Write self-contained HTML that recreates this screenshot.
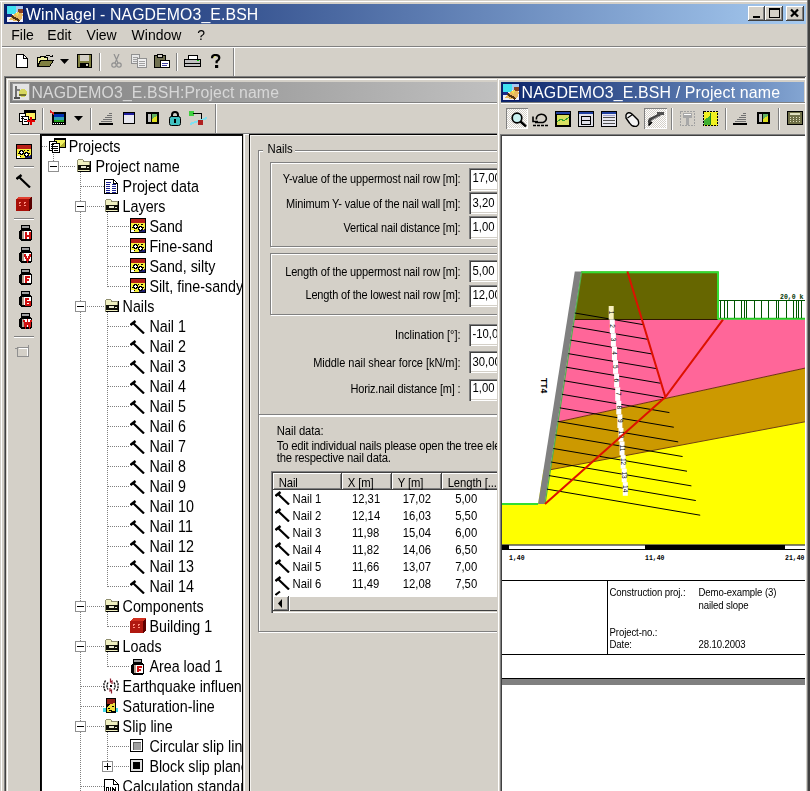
<!DOCTYPE html>
<html><head><meta charset="utf-8"><style>
html,body{margin:0;padding:0}
body{width:810px;height:791px;overflow:hidden;position:relative;background:#D4D0C8;font-family:"Liberation Sans", sans-serif}
.t{position:absolute;white-space:nowrap;line-height:1;font-family:"Liberation Sans", sans-serif;filter:grayscale(1)}
svg{overflow:hidden}
</style></head><body>
<div style="position:absolute;left:0px;top:0px;width:810px;height:1px;background:#D4D0C8"></div><div style="position:absolute;left:0px;top:1px;width:810px;height:1px;background:#FFFFFF"></div><div style="position:absolute;left:1px;top:1px;width:1px;height:790px;background:#FFFFFF"></div><div style="position:absolute;left:807px;top:0px;width:1px;height:791px;background:#808080"></div><div style="position:absolute;left:808px;top:0px;width:1px;height:791px;background:#404040"></div><div style="position:absolute;left:809px;top:0px;width:1px;height:791px;background:#404040"></div><div style="position:absolute;left:4px;top:4px;width:802px;height:20px;background:linear-gradient(to right,#0A246A,#A6CAF0)"></div><svg style="position:absolute;left:6px;top:5px" width="18" height="18" viewBox="0 0 18 18" shape-rendering="crispEdges"><rect x="0" y="0" width="18" height="18" fill="#0A1A6A"/><rect x="1" y="1" width="16" height="16" fill="#EEF0F8"/><rect x="1" y="1" width="9" height="8" fill="#40E0F0"/><rect x="10" y="1" width="7" height="6" fill="#A8C8F0"/><rect x="1" y="9" width="5" height="3" fill="#1A2A8A"/><polygon points="3,15 7,10 12,7 17,9 16,14 10,16" fill="#E8B860"/><polygon points="6,10 14,15 13,17 5,12" fill="#503010"/><rect x="12" y="4" width="5" height="4" fill="#8A4020"/><polygon points="9,9 13,7 12,11" fill="#F0E050"/></svg><div class="t" style="left:26px;top:6.63px;font-size:15.8px;color:#fff;letter-spacing:0.13px">WinNagel - NAGDEMO3_E.BSH</div><div style="position:absolute;left:748px;top:6px;width:17px;height:15px;background:#D4D0C8;box-shadow:inset -1px -1px #404040,inset 1px 1px #FFFFFF,inset -2px -2px #808080"></div><svg style="position:absolute;left:748px;top:6px" width="17" height="15" viewBox="0 0 17 15" shape-rendering="crispEdges"><rect x="5" y="10" width="7" height="2" fill="#000"/></svg><div style="position:absolute;left:765px;top:6px;width:18px;height:15px;background:#D4D0C8;box-shadow:inset -1px -1px #404040,inset 1px 1px #FFFFFF,inset -2px -2px #808080"></div><svg style="position:absolute;left:765px;top:6px" width="18" height="15" viewBox="0 0 18 15" shape-rendering="crispEdges"><rect x="4" y="2" width="10" height="9" fill="none" stroke="#000" stroke-width="1" transform="translate(0.5,0.5)"/><rect x="4" y="2" width="11" height="2" fill="#000"/></svg><div style="position:absolute;left:786px;top:6px;width:18px;height:15px;background:#D4D0C8;box-shadow:inset -1px -1px #404040,inset 1px 1px #FFFFFF,inset -2px -2px #808080"></div><svg style="position:absolute;left:786px;top:6px" width="18" height="15" viewBox="0 0 18 15" shape-rendering="crispEdges"><path d="M5 3.5 L12 10.5 M12 3.5 L5 10.5" stroke="#000" stroke-width="2.2" shape-rendering="auto"/></svg><div class="t" style="left:11.3px;top:28.15px;font-size:14px;color:#000;transform:scaleY(1.08);transform-origin:0 11.85px;">File</div><div class="t" style="left:47.3px;top:28.15px;font-size:14px;color:#000;transform:scaleY(1.08);transform-origin:0 11.85px;">Edit</div><div class="t" style="left:86.6px;top:28.15px;font-size:14px;color:#000;transform:scaleY(1.08);transform-origin:0 11.85px;">View</div><div class="t" style="left:131.6px;top:28.15px;font-size:14px;color:#000;transform:scaleY(1.08);transform-origin:0 11.85px;">Window</div><div class="t" style="left:197.2px;top:28.15px;font-size:14px;color:#000;transform:scaleY(1.08);transform-origin:0 11.85px;">?</div><div style="position:absolute;left:2px;top:46px;width:804px;height:1px;background:#808080"></div><div style="position:absolute;left:2px;top:47px;width:804px;height:1px;background:#FFFFFF"></div><svg style="position:absolute;left:16px;top:54px" width="12" height="14" viewBox="0 0 12 14" shape-rendering="crispEdges"><path d="M0.5 0.5 H7.5 L11.5 4.5 V13.5 H0.5 Z" fill="#fff" stroke="#000"/><path d="M7.5 0.5 V4.5 H11.5" fill="none" stroke="#000"/></svg><svg style="position:absolute;left:37px;top:54px" width="17" height="13" viewBox="0 0 17 13" shape-rendering="crispEdges"><path d="M0.5 3.5 H3 L4 2.5 H7 L8 3.5 H10.5 V6 H3.5 L0.5 12.5 Z" fill="#F0F0A0" stroke="#000"/><path d="M0.5 12.5 L4 6.5 H16.5 L12.5 12.5 Z" fill="#808040" stroke="#000"/><path d="M8 2.5 Q11 -0.5 14 2.5" fill="none" stroke="#000"/><path d="M12.5 2.5 H15.5 V0.5" fill="none" stroke="#000"/></svg><svg style="position:absolute;left:60px;top:59px" width="9" height="5" viewBox="0 0 9 5"><polygon points="0,0 9,0 4.5,5" fill="#000"/></svg><svg style="position:absolute;left:77px;top:54px" width="15" height="14" viewBox="0 0 15 14" shape-rendering="crispEdges"><rect x="0.5" y="0.5" width="14" height="13" fill="#808040" stroke="#000"/><rect x="3" y="1" width="9" height="6" fill="#D4D0C8"/><rect x="3" y="9" width="9" height="4" fill="#000"/><rect x="9" y="10" width="2" height="2" fill="#D4D0C8"/></svg><div style="position:absolute;left:99px;top:53px;width:1px;height:18px;background:#808080"></div><div style="position:absolute;left:100px;top:53px;width:1px;height:18px;background:#FFFFFF"></div><svg style="position:absolute;left:111px;top:54px" width="11" height="14" viewBox="0 0 11 14"><path d="M3 0 L7 9 M8 0 L4 9" stroke="#909090" stroke-width="1.2"/><circle cx="3" cy="11" r="2.2" fill="none" stroke="#909090" stroke-width="1.2"/><circle cx="8" cy="11" r="2.2" fill="none" stroke="#909090" stroke-width="1.2"/></svg><svg style="position:absolute;left:131px;top:54px" width="16" height="14" viewBox="0 0 16 14" shape-rendering="crispEdges"><rect x="0.5" y="0.5" width="8" height="9" fill="#E8E8E8" stroke="#909090"/><rect x="6.5" y="4.5" width="9" height="9" fill="#F0F0F0" stroke="#909090"/><path d="M2 3H7M2 5H7M2 7H6M8 7H14M8 9H14M8 11H14" stroke="#A0A0A0"/></svg><svg style="position:absolute;left:154px;top:54px" width="16" height="14" viewBox="0 0 16 14" shape-rendering="crispEdges"><rect x="0.5" y="1.5" width="11" height="12" fill="#707050" stroke="#000"/><rect x="3.5" y="0.5" width="5" height="3" fill="#D4D0C8" stroke="#000"/><rect x="6.5" y="6.5" width="9" height="7" fill="#fff" stroke="#000"/><path d="M8 9H14M8 11H13" stroke="#4040A0"/></svg><div style="position:absolute;left:176px;top:53px;width:1px;height:18px;background:#808080"></div><div style="position:absolute;left:177px;top:53px;width:1px;height:18px;background:#FFFFFF"></div><svg style="position:absolute;left:184px;top:55px" width="17" height="12" viewBox="0 0 17 12" shape-rendering="crispEdges"><rect x="4.5" y="0.5" width="9" height="4" fill="#fff" stroke="#000"/><path d="M0.5 4.5 H16.5 V11.5 H0.5 Z" fill="#C0C0C0" stroke="#000"/><path d="M1 8H16" stroke="#000"/><rect x="13" y="5" width="2" height="1" fill="#0C0"/></svg><svg style="position:absolute;left:210px;top:54px" width="11" height="14" viewBox="0 0 11 14"><path d="M2 4.2 Q2 1 5.5 1 Q9.3 1 9.3 4 Q9.3 6 6.6 7.5 L6.6 9.3" fill="none" stroke="#000" stroke-width="2.2"/><rect x="5" y="11" width="3.2" height="3" fill="#000"/><path d="M4 4 Q4 2.5 5.5 2.5" stroke="#F0F060" fill="none"/></svg><div style="position:absolute;left:233px;top:48px;width:1px;height:28px;background:#808080"></div><div style="position:absolute;left:234px;top:48px;width:1px;height:28px;background:#FFFFFF"></div><div style="position:absolute;left:4px;top:76px;width:802px;height:1px;background:#808080"></div><div style="position:absolute;left:4px;top:76px;width:1px;height:715px;background:#808080"></div><div style="position:absolute;left:5px;top:77px;width:801px;height:1px;background:#404040"></div><div style="position:absolute;left:5px;top:77px;width:1px;height:714px;background:#404040"></div><div style="position:absolute;left:805px;top:77px;width:1px;height:714px;background:#FFFFFF"></div><div style="position:absolute;left:6px;top:78px;width:491px;height:1px;background:#D4D0C8"></div><div style="position:absolute;left:6px;top:78px;width:1px;height:713px;background:#D4D0C8"></div><div style="position:absolute;left:7px;top:79px;width:490px;height:1px;background:#FFFFFF"></div><div style="position:absolute;left:7px;top:79px;width:1px;height:712px;background:#FFFFFF"></div><div style="position:absolute;left:10px;top:82px;width:487px;height:20px;background:linear-gradient(to right,#808080,#C0C0C0 488px)"></div><svg style="position:absolute;left:12px;top:83px" width="18" height="18" viewBox="0 0 18 18" shape-rendering="crispEdges"><rect x="0" y="0" width="18" height="18" fill="#9A9A9A"/><rect x="1" y="1" width="16" height="16" fill="#E4E4E4"/><rect x="3" y="3" width="2" height="11" fill="#707070"/><rect x="5" y="6" width="3" height="2" fill="#808080"/><circle cx="11" cy="10" r="4" fill="#D8D860"/><rect x="7" y="11" width="7" height="2" fill="#707030"/><rect x="2" y="14" width="6" height="2" fill="#505050"/></svg><div class="t" style="left:31.5px;top:84.63px;font-size:15.8px;color:#D8D8D0;letter-spacing:0.13px">NAGDEMO3_E.BSH:Project name</div><div style="position:absolute;left:10px;top:102px;width:487px;height:1px;background:#808080"></div><div style="position:absolute;left:10px;top:103px;width:487px;height:1px;background:#FFFFFF"></div><div style="position:absolute;left:10px;top:133px;width:487px;height:1px;background:#808080"></div><div style="position:absolute;left:10px;top:134px;width:487px;height:1px;background:#FFFFFF"></div><svg style="position:absolute;left:19px;top:110px" width="17" height="16" viewBox="0 0 17 16" shape-rendering="crispEdges"><rect x="5.5" y="0.5" width="11" height="9" fill="#FFF060" stroke="#000"/><rect x="5.5" y="0.5" width="11" height="2" fill="#000"/><rect x="0.5" y="3.5" width="6" height="8" fill="#fff" stroke="#000"/><rect x="3.5" y="6.5" width="6" height="8" fill="#fff" stroke="#000"/><path d="M2 6H5M2 8H5M5 9H8M5 11H8" stroke="#000"/><path d="M12 7 V15 M8 11 H16" stroke="#E00000" stroke-width="2"/></svg><div style="position:absolute;left:42px;top:108px;width:1px;height:22px;background:#808080"></div><div style="position:absolute;left:43px;top:108px;width:1px;height:22px;background:#FFFFFF"></div><svg style="position:absolute;left:50px;top:110px" width="17" height="15" viewBox="0 0 17 15" shape-rendering="crispEdges"><rect x="2" y="2" width="14" height="13" fill="#000"/><rect x="4" y="4" width="10" height="4" fill="#0030B0"/><rect x="4" y="7" width="10" height="3" fill="#30A0B0"/><rect x="4" y="10" width="10" height="2" fill="#20A020"/><path d="M3 13.5H15" stroke="#fff" stroke-dasharray="1 1"/><path d="M0 1 L4 4" stroke="#E02020" stroke-width="2"/></svg><svg style="position:absolute;left:74px;top:116px" width="9" height="5" viewBox="0 0 9 5"><polygon points="0,0 9,0 4.5,5" fill="#000"/></svg><div style="position:absolute;left:90px;top:108px;width:1px;height:22px;background:#808080"></div><div style="position:absolute;left:91px;top:108px;width:1px;height:22px;background:#FFFFFF"></div><svg style="position:absolute;left:99px;top:113px" width="14" height="12" viewBox="0 0 14 12" shape-rendering="crispEdges"><path d="M10 0.5H13M8 2.5H13M6 4.5H13M4 6.5H13M2 8.5H13" stroke="#707070"/><rect x="0" y="10" width="14" height="2" fill="#000"/></svg><svg style="position:absolute;left:123px;top:112px" width="12" height="12" viewBox="0 0 12 12" shape-rendering="crispEdges"><rect x="0.5" y="0.5" width="11" height="11" fill="#E8E8F0" stroke="#000"/><rect x="1" y="1" width="10" height="2" fill="#2020A0"/></svg><svg style="position:absolute;left:146px;top:112px" width="13" height="12" viewBox="0 0 13 12" shape-rendering="crispEdges"><rect x="0" y="0" width="13" height="12" fill="#000"/><rect x="2" y="2" width="3" height="8" fill="#C0C0C0"/><rect x="6" y="2" width="5" height="8" fill="#60B060"/><polygon points="6,10 6,7 11,4 11,10" fill="#E0E020"/></svg><svg style="position:absolute;left:169px;top:111px" width="12" height="15" viewBox="0 0 12 15"><path d="M3 6 V4 Q3 1 6 1 Q9 1 9 4 V6" fill="none" stroke="#000" stroke-width="2"/><rect x="0.5" y="5.5" width="11" height="9" rx="2" fill="#40C0C0" stroke="#000"/><rect x="5" y="8" width="2" height="4" fill="#000"/></svg><svg style="position:absolute;left:189px;top:111px" width="19" height="15" viewBox="0 0 19 15" shape-rendering="crispEdges"><rect x="0" y="0" width="5" height="5" fill="#40D040"/><path d="M4 2.5H12V9" fill="none" stroke="#000"/><path d="M1 13 L18 7" stroke="#80E0F0" stroke-width="2"/><rect x="9" y="9" width="5" height="5" fill="#B02020"/></svg><div style="position:absolute;left:215px;top:104px;width:1px;height:29px;background:#808080"></div><div style="position:absolute;left:216px;top:104px;width:1px;height:29px;background:#FFFFFF"></div><svg style="position:absolute;left:16px;top:144px" width="16" height="15" viewBox="0 0 16 15" shape-rendering="crispEdges"><rect x="0" y="0" width="16" height="15" fill="#000"/><rect x="1" y="1" width="14" height="4" fill="#B82018"/><rect x="1" y="5" width="14" height="9" fill="#F8F040"/><polygon points="8,14 15,11 15,14" fill="#202070"/><circle cx="5.5" cy="8.5" r="1.8" fill="#fff" stroke="#000" stroke-width="1.2"/><circle cx="10.5" cy="10.5" r="1.8" fill="#fff" stroke="#000" stroke-width="1.2"/><path d="M2 9.5h1M11 6.5h2M3 12.5h2M8 6.5h1M13 9h1" stroke="#000"/><rect x="1" y="12" width="3" height="2" fill="#fff"/></svg><div style="position:absolute;left:14px;top:166px;width:20px;height:1px;background:#808080"></div><div style="position:absolute;left:14px;top:167px;width:20px;height:1px;background:#FFFFFF"></div><svg style="position:absolute;left:16px;top:174px" width="15" height="14" viewBox="0 0 15 14"><path d="M0.5 5 L5.5 1" stroke="#000" stroke-width="2.4"/><path d="M3 3 L14 13.5" stroke="#000" stroke-width="2.2"/></svg><svg style="position:absolute;left:16px;top:197px" width="16" height="14" viewBox="0 0 16 14" shape-rendering="crispEdges"><rect x="0" y="2" width="13" height="12" fill="#A81008"/><polygon points="0,2 3,0 16,0 13,2" fill="#E04030"/><polygon points="13,2 16,0 16,11 13,14" fill="#580000"/><path d="M3 5H5M3 8H5M8 5H10M8 8H10M3 6V7M8 6V7" stroke="#FF9080"/></svg><div style="position:absolute;left:14px;top:218px;width:20px;height:1px;background:#808080"></div><div style="position:absolute;left:14px;top:219px;width:20px;height:1px;background:#FFFFFF"></div><svg style="position:absolute;left:18px;top:225px" width="15" height="16" viewBox="0 0 15 16" shape-rendering="crispEdges"><rect x="3" y="0" width="9" height="4" fill="#000"/><rect x="4" y="1" width="7" height="2" fill="#A0A0A0"/><polygon points="3,4 12,4 14,6 14,14 12,16 3,16 1,14 1,6" fill="#000"/><rect x="4" y="6" width="9" height="8" fill="#fff"/><rect x="4" y="6" width="2" height="8" fill="#B0A090"/><path d="M7.5 7 V14 M11.5 7 V14 M7.5 10.5 H11.5" fill="none" stroke="#D01010" stroke-width="2"/></svg><svg style="position:absolute;left:18px;top:247px" width="15" height="16" viewBox="0 0 15 16" shape-rendering="crispEdges"><rect x="3" y="0" width="9" height="4" fill="#000"/><rect x="4" y="1" width="7" height="2" fill="#A0A0A0"/><polygon points="3,4 12,4 14,6 14,14 12,16 3,16 1,14 1,6" fill="#000"/><rect x="4" y="6" width="9" height="8" fill="#fff"/><rect x="4" y="6" width="2" height="8" fill="#B0A090"/><path d="M6.5 7 L9.5 14 L12.5 7" fill="none" stroke="#D01010" stroke-width="2"/></svg><svg style="position:absolute;left:18px;top:269px" width="15" height="16" viewBox="0 0 15 16" shape-rendering="crispEdges"><rect x="3" y="0" width="9" height="4" fill="#000"/><rect x="4" y="1" width="7" height="2" fill="#A0A0A0"/><polygon points="3,4 12,4 14,6 14,14 12,16 3,16 1,14 1,6" fill="#000"/><rect x="4" y="6" width="9" height="8" fill="#fff"/><rect x="4" y="6" width="2" height="8" fill="#B0A090"/><path d="M7.5 7 V14 M7.5 7.5 H12 M7.5 10.5 H11" fill="none" stroke="#D01010" stroke-width="2"/></svg><svg style="position:absolute;left:18px;top:291px" width="15" height="16" viewBox="0 0 15 16" shape-rendering="crispEdges"><rect x="3" y="0" width="9" height="4" fill="#000"/><rect x="4" y="1" width="7" height="2" fill="#A0A0A0"/><polygon points="3,4 12,4 14,6 14,14 12,16 3,16 1,14 1,6" fill="#000"/><rect x="4" y="6" width="9" height="8" fill="#fff"/><rect x="4" y="6" width="2" height="8" fill="#B0A090"/><path d="M7.5 7 V14 H11.5 V10.5 H7.5 M7.5 7.5 H11" fill="none" stroke="#D01010" stroke-width="2"/></svg><svg style="position:absolute;left:18px;top:313px" width="15" height="16" viewBox="0 0 15 16" shape-rendering="crispEdges"><rect x="3" y="0" width="9" height="4" fill="#000"/><rect x="4" y="1" width="7" height="2" fill="#A0A0A0"/><polygon points="3,4 12,4 14,6 14,14 12,16 3,16 1,14 1,6" fill="#000"/><rect x="4" y="6" width="9" height="8" fill="#fff"/><rect x="4" y="6" width="2" height="8" fill="#B0A090"/><path d="M6 7 L7.5 14 L9.5 9 L11.5 14 L13 7" fill="none" stroke="#D01010" stroke-width="2"/></svg><div style="position:absolute;left:14px;top:336px;width:20px;height:1px;background:#808080"></div><div style="position:absolute;left:14px;top:337px;width:20px;height:1px;background:#FFFFFF"></div><svg style="position:absolute;left:15px;top:344px" width="17" height="14" viewBox="0 0 17 14" shape-rendering="crispEdges"><path d="M2.5 3.5 H13.5 V12.5 H2.5 Z M0 4.5 H3 M13 1 V4" fill="none" stroke="#909090"/><path d="M3.5 4.5H12.5V11.5" fill="none" stroke="#fff"/></svg><div style="position:absolute;left:40px;top:134px;width:204px;height:657px;background:#fff"></div><div style="position:absolute;left:40px;top:134px;width:203px;height:1px;background:#000"></div><div style="position:absolute;left:40px;top:135px;width:203px;height:1px;background:#101010"></div><div style="position:absolute;left:40px;top:134px;width:1px;height:657px;background:#000"></div><div style="position:absolute;left:41px;top:134px;width:1px;height:657px;background:#101010"></div><div style="position:absolute;left:242px;top:134px;width:1px;height:657px;background:#000"></div><div style="position:absolute;left:243px;top:134px;width:1px;height:657px;background:#D4D0C8"></div><div style="position:absolute;left:244px;top:134px;width:1px;height:657px;background:#FFFFFF"></div><div style="position:absolute;left:42px;top:136px;width:200px;height:655px;overflow:hidden"><div style="position:absolute;left:11px;top:16px;width:1px;height:10px;background:repeating-linear-gradient(to bottom,#808080 0 1px,transparent 1px 2px)"></div><div style="position:absolute;left:38px;top:36px;width:1px;height:619px;background:repeating-linear-gradient(to bottom,#808080 0 1px,transparent 1px 2px)"></div><div style="position:absolute;left:65px;top:76px;width:1px;height:75px;background:repeating-linear-gradient(to bottom,#808080 0 1px,transparent 1px 2px)"></div><div style="position:absolute;left:65px;top:176px;width:1px;height:275px;background:repeating-linear-gradient(to bottom,#808080 0 1px,transparent 1px 2px)"></div><div style="position:absolute;left:65px;top:476px;width:1px;height:15px;background:repeating-linear-gradient(to bottom,#808080 0 1px,transparent 1px 2px)"></div><div style="position:absolute;left:65px;top:516px;width:1px;height:15px;background:repeating-linear-gradient(to bottom,#808080 0 1px,transparent 1px 2px)"></div><div style="position:absolute;left:65px;top:596px;width:1px;height:35px;background:repeating-linear-gradient(to bottom,#808080 0 1px,transparent 1px 2px)"></div><div style="position:absolute;left:0px;top:10px;width:6px;height:1px;background:repeating-linear-gradient(to right,#808080 0 1px,transparent 1px 2px)"></div><svg style="position:absolute;left:7px;top:2px" width="17" height="15" viewBox="0 0 17 15" shape-rendering="crispEdges"><rect x="5" y="0" width="12" height="10" fill="#000"/><rect x="6" y="2" width="10" height="7" fill="#F0F060"/><polygon points="10,9 16,3 16,9" fill="#B0B030"/><rect x="0.5" y="3.5" width="7" height="9" fill="#fff" stroke="#000"/><rect x="3.5" y="5.5" width="7" height="9" fill="#fff" stroke="#000"/><path d="M2 6H5M2 8H5M2 10H5M5 8H9M5 10H9M5 12H9" stroke="#000"/></svg><div class="t" style="left:26.8px;top:3.9px;font-size:14.3px;color:#000;transform:scaleY(1.09);transform-origin:0 12.1px;word-spacing:0px">Projects</div><div style="position:absolute;left:12px;top:30px;width:22px;height:1px;background:repeating-linear-gradient(to right,#808080 0 1px,transparent 1px 2px)"></div><svg style="position:absolute;left:6px;top:25px" width="11" height="11" viewBox="0 0 11 11" shape-rendering="crispEdges"><rect x="0.5" y="0.5" width="10" height="10" fill="#fff" stroke="#909090"/><path d="M2 5.5H9" stroke="#000"/></svg><svg style="position:absolute;left:34px;top:22px" width="16" height="14" viewBox="0 0 16 14" shape-rendering="crispEdges"><path d="M1.5 4 V2.5 L2.5 1.5 H6.5 L7.5 2.5 V3.5 H13.5 V13.5 H1.5 Z" fill="#F0F0C0" stroke="#909070"/><rect x="14" y="3" width="1" height="11" fill="#000"/><rect x="2" y="13" width="13" height="1" fill="#000"/><rect x="2" y="7" width="12" height="5" fill="#101008"/><rect x="5" y="8" width="5" height="2" fill="#E8E8D0"/><rect x="11" y="9" width="2" height="1" fill="#E8E8D0"/></svg><div class="t" style="left:53.4px;top:23.9px;font-size:14.3px;color:#000;transform:scaleY(1.09);transform-origin:0 12.1px;word-spacing:0px">Project name</div><div style="position:absolute;left:39px;top:50px;width:23px;height:1px;background:repeating-linear-gradient(to right,#808080 0 1px,transparent 1px 2px)"></div><svg style="position:absolute;left:62px;top:43px" width="14" height="15" viewBox="0 0 14 15" shape-rendering="crispEdges"><path d="M0.5 0.5 H9.5 L13.5 4.5 V14.5 H0.5 Z" fill="#fff" stroke="#000"/><path d="M9.5 0.5 V4.5 H13.5" fill="none" stroke="#000"/><path d="M2 3H7M2 5H6M8 5H12M2 7H6M8 7H12M2 9H6M8 9H12M2 11H6M8 11H12M2 13H6M8 13H12" stroke="#1A2090"/></svg><div class="t" style="left:80.6px;top:43.9px;font-size:14.3px;color:#000;transform:scaleY(1.09);transform-origin:0 12.1px;word-spacing:0px">Project data</div><div style="position:absolute;left:39px;top:70px;width:23px;height:1px;background:repeating-linear-gradient(to right,#808080 0 1px,transparent 1px 2px)"></div><svg style="position:absolute;left:33px;top:65px" width="11" height="11" viewBox="0 0 11 11" shape-rendering="crispEdges"><rect x="0.5" y="0.5" width="10" height="10" fill="#fff" stroke="#909090"/><path d="M2 5.5H9" stroke="#000"/></svg><svg style="position:absolute;left:62px;top:62px" width="16" height="14" viewBox="0 0 16 14" shape-rendering="crispEdges"><path d="M1.5 4 V2.5 L2.5 1.5 H6.5 L7.5 2.5 V3.5 H13.5 V13.5 H1.5 Z" fill="#F0F0C0" stroke="#909070"/><rect x="14" y="3" width="1" height="11" fill="#000"/><rect x="2" y="13" width="13" height="1" fill="#000"/><rect x="2" y="7" width="12" height="5" fill="#101008"/><rect x="5" y="8" width="5" height="2" fill="#E8E8D0"/><rect x="11" y="9" width="2" height="1" fill="#E8E8D0"/></svg><div class="t" style="left:80.6px;top:63.9px;font-size:14.3px;color:#000;transform:scaleY(1.09);transform-origin:0 12.1px;word-spacing:0px">Layers</div><div style="position:absolute;left:66px;top:90px;width:22px;height:1px;background:repeating-linear-gradient(to right,#808080 0 1px,transparent 1px 2px)"></div><svg style="position:absolute;left:88px;top:82px" width="16" height="15" viewBox="0 0 16 15" shape-rendering="crispEdges"><rect x="0" y="0" width="16" height="15" fill="#000"/><rect x="1" y="1" width="14" height="4" fill="#B82018"/><rect x="1" y="5" width="14" height="9" fill="#F8F040"/><polygon points="8,14 15,11 15,14" fill="#202070"/><circle cx="5.5" cy="8.5" r="1.8" fill="#fff" stroke="#000" stroke-width="1.2"/><circle cx="10.5" cy="10.5" r="1.8" fill="#fff" stroke="#000" stroke-width="1.2"/><path d="M2 9.5h1M11 6.5h2M3 12.5h2M8 6.5h1M13 9h1" stroke="#000"/><rect x="1" y="12" width="3" height="2" fill="#fff"/></svg><div class="t" style="left:107.4px;top:83.9px;font-size:14.3px;color:#000;transform:scaleY(1.09);transform-origin:0 12.1px;word-spacing:0px">Sand</div><div style="position:absolute;left:66px;top:110px;width:22px;height:1px;background:repeating-linear-gradient(to right,#808080 0 1px,transparent 1px 2px)"></div><svg style="position:absolute;left:88px;top:102px" width="16" height="15" viewBox="0 0 16 15" shape-rendering="crispEdges"><rect x="0" y="0" width="16" height="15" fill="#000"/><rect x="1" y="1" width="14" height="4" fill="#B82018"/><rect x="1" y="5" width="14" height="9" fill="#F8F040"/><polygon points="8,14 15,11 15,14" fill="#202070"/><circle cx="5.5" cy="8.5" r="1.8" fill="#fff" stroke="#000" stroke-width="1.2"/><circle cx="10.5" cy="10.5" r="1.8" fill="#fff" stroke="#000" stroke-width="1.2"/><path d="M2 9.5h1M11 6.5h2M3 12.5h2M8 6.5h1M13 9h1" stroke="#000"/><rect x="1" y="12" width="3" height="2" fill="#fff"/></svg><div class="t" style="left:107.4px;top:103.9px;font-size:14.3px;color:#000;transform:scaleY(1.09);transform-origin:0 12.1px;word-spacing:0px">Fine-sand</div><div style="position:absolute;left:66px;top:130px;width:22px;height:1px;background:repeating-linear-gradient(to right,#808080 0 1px,transparent 1px 2px)"></div><svg style="position:absolute;left:88px;top:122px" width="16" height="15" viewBox="0 0 16 15" shape-rendering="crispEdges"><rect x="0" y="0" width="16" height="15" fill="#000"/><rect x="1" y="1" width="14" height="4" fill="#B82018"/><rect x="1" y="5" width="14" height="9" fill="#F8F040"/><polygon points="8,14 15,11 15,14" fill="#202070"/><circle cx="5.5" cy="8.5" r="1.8" fill="#fff" stroke="#000" stroke-width="1.2"/><circle cx="10.5" cy="10.5" r="1.8" fill="#fff" stroke="#000" stroke-width="1.2"/><path d="M2 9.5h1M11 6.5h2M3 12.5h2M8 6.5h1M13 9h1" stroke="#000"/><rect x="1" y="12" width="3" height="2" fill="#fff"/></svg><div class="t" style="left:107.4px;top:123.9px;font-size:14.3px;color:#000;transform:scaleY(1.09);transform-origin:0 12.1px;word-spacing:0px">Sand, silty</div><div style="position:absolute;left:66px;top:150px;width:22px;height:1px;background:repeating-linear-gradient(to right,#808080 0 1px,transparent 1px 2px)"></div><svg style="position:absolute;left:88px;top:142px" width="16" height="15" viewBox="0 0 16 15" shape-rendering="crispEdges"><rect x="0" y="0" width="16" height="15" fill="#000"/><rect x="1" y="1" width="14" height="4" fill="#B82018"/><rect x="1" y="5" width="14" height="9" fill="#F8F040"/><polygon points="8,14 15,11 15,14" fill="#202070"/><circle cx="5.5" cy="8.5" r="1.8" fill="#fff" stroke="#000" stroke-width="1.2"/><circle cx="10.5" cy="10.5" r="1.8" fill="#fff" stroke="#000" stroke-width="1.2"/><path d="M2 9.5h1M11 6.5h2M3 12.5h2M8 6.5h1M13 9h1" stroke="#000"/><rect x="1" y="12" width="3" height="2" fill="#fff"/></svg><div class="t" style="left:107.4px;top:143.9px;font-size:14.3px;color:#000;transform:scaleY(1.09);transform-origin:0 12.1px;word-spacing:0px">Silt, fine-sandy</div><div style="position:absolute;left:39px;top:170px;width:23px;height:1px;background:repeating-linear-gradient(to right,#808080 0 1px,transparent 1px 2px)"></div><svg style="position:absolute;left:33px;top:165px" width="11" height="11" viewBox="0 0 11 11" shape-rendering="crispEdges"><rect x="0.5" y="0.5" width="10" height="10" fill="#fff" stroke="#909090"/><path d="M2 5.5H9" stroke="#000"/></svg><svg style="position:absolute;left:62px;top:162px" width="16" height="14" viewBox="0 0 16 14" shape-rendering="crispEdges"><path d="M1.5 4 V2.5 L2.5 1.5 H6.5 L7.5 2.5 V3.5 H13.5 V13.5 H1.5 Z" fill="#F0F0C0" stroke="#909070"/><rect x="14" y="3" width="1" height="11" fill="#000"/><rect x="2" y="13" width="13" height="1" fill="#000"/><rect x="2" y="7" width="12" height="5" fill="#101008"/><rect x="5" y="8" width="5" height="2" fill="#E8E8D0"/><rect x="11" y="9" width="2" height="1" fill="#E8E8D0"/></svg><div class="t" style="left:80.6px;top:163.9px;font-size:14.3px;color:#000;transform:scaleY(1.09);transform-origin:0 12.1px;word-spacing:0px">Nails</div><div style="position:absolute;left:66px;top:190px;width:22px;height:1px;background:repeating-linear-gradient(to right,#808080 0 1px,transparent 1px 2px)"></div><svg style="position:absolute;left:88px;top:184px" width="15" height="14" viewBox="0 0 15 14"><path d="M0.5 5 L5.5 1" stroke="#000" stroke-width="2.4"/><path d="M3 3 L14 13.5" stroke="#000" stroke-width="2.2"/></svg><div class="t" style="left:107.4px;top:183.9px;font-size:14.3px;color:#000;transform:scaleY(1.09);transform-origin:0 12.1px;word-spacing:0px">Nail 1</div><div style="position:absolute;left:66px;top:210px;width:22px;height:1px;background:repeating-linear-gradient(to right,#808080 0 1px,transparent 1px 2px)"></div><svg style="position:absolute;left:88px;top:204px" width="15" height="14" viewBox="0 0 15 14"><path d="M0.5 5 L5.5 1" stroke="#000" stroke-width="2.4"/><path d="M3 3 L14 13.5" stroke="#000" stroke-width="2.2"/></svg><div class="t" style="left:107.4px;top:203.9px;font-size:14.3px;color:#000;transform:scaleY(1.09);transform-origin:0 12.1px;word-spacing:0px">Nail 2</div><div style="position:absolute;left:66px;top:230px;width:22px;height:1px;background:repeating-linear-gradient(to right,#808080 0 1px,transparent 1px 2px)"></div><svg style="position:absolute;left:88px;top:224px" width="15" height="14" viewBox="0 0 15 14"><path d="M0.5 5 L5.5 1" stroke="#000" stroke-width="2.4"/><path d="M3 3 L14 13.5" stroke="#000" stroke-width="2.2"/></svg><div class="t" style="left:107.4px;top:223.9px;font-size:14.3px;color:#000;transform:scaleY(1.09);transform-origin:0 12.1px;word-spacing:0px">Nail 3</div><div style="position:absolute;left:66px;top:250px;width:22px;height:1px;background:repeating-linear-gradient(to right,#808080 0 1px,transparent 1px 2px)"></div><svg style="position:absolute;left:88px;top:244px" width="15" height="14" viewBox="0 0 15 14"><path d="M0.5 5 L5.5 1" stroke="#000" stroke-width="2.4"/><path d="M3 3 L14 13.5" stroke="#000" stroke-width="2.2"/></svg><div class="t" style="left:107.4px;top:243.9px;font-size:14.3px;color:#000;transform:scaleY(1.09);transform-origin:0 12.1px;word-spacing:0px">Nail 4</div><div style="position:absolute;left:66px;top:270px;width:22px;height:1px;background:repeating-linear-gradient(to right,#808080 0 1px,transparent 1px 2px)"></div><svg style="position:absolute;left:88px;top:264px" width="15" height="14" viewBox="0 0 15 14"><path d="M0.5 5 L5.5 1" stroke="#000" stroke-width="2.4"/><path d="M3 3 L14 13.5" stroke="#000" stroke-width="2.2"/></svg><div class="t" style="left:107.4px;top:263.9px;font-size:14.3px;color:#000;transform:scaleY(1.09);transform-origin:0 12.1px;word-spacing:0px">Nail 5</div><div style="position:absolute;left:66px;top:290px;width:22px;height:1px;background:repeating-linear-gradient(to right,#808080 0 1px,transparent 1px 2px)"></div><svg style="position:absolute;left:88px;top:284px" width="15" height="14" viewBox="0 0 15 14"><path d="M0.5 5 L5.5 1" stroke="#000" stroke-width="2.4"/><path d="M3 3 L14 13.5" stroke="#000" stroke-width="2.2"/></svg><div class="t" style="left:107.4px;top:283.9px;font-size:14.3px;color:#000;transform:scaleY(1.09);transform-origin:0 12.1px;word-spacing:0px">Nail 6</div><div style="position:absolute;left:66px;top:310px;width:22px;height:1px;background:repeating-linear-gradient(to right,#808080 0 1px,transparent 1px 2px)"></div><svg style="position:absolute;left:88px;top:304px" width="15" height="14" viewBox="0 0 15 14"><path d="M0.5 5 L5.5 1" stroke="#000" stroke-width="2.4"/><path d="M3 3 L14 13.5" stroke="#000" stroke-width="2.2"/></svg><div class="t" style="left:107.4px;top:303.9px;font-size:14.3px;color:#000;transform:scaleY(1.09);transform-origin:0 12.1px;word-spacing:0px">Nail 7</div><div style="position:absolute;left:66px;top:330px;width:22px;height:1px;background:repeating-linear-gradient(to right,#808080 0 1px,transparent 1px 2px)"></div><svg style="position:absolute;left:88px;top:324px" width="15" height="14" viewBox="0 0 15 14"><path d="M0.5 5 L5.5 1" stroke="#000" stroke-width="2.4"/><path d="M3 3 L14 13.5" stroke="#000" stroke-width="2.2"/></svg><div class="t" style="left:107.4px;top:323.9px;font-size:14.3px;color:#000;transform:scaleY(1.09);transform-origin:0 12.1px;word-spacing:0px">Nail 8</div><div style="position:absolute;left:66px;top:350px;width:22px;height:1px;background:repeating-linear-gradient(to right,#808080 0 1px,transparent 1px 2px)"></div><svg style="position:absolute;left:88px;top:344px" width="15" height="14" viewBox="0 0 15 14"><path d="M0.5 5 L5.5 1" stroke="#000" stroke-width="2.4"/><path d="M3 3 L14 13.5" stroke="#000" stroke-width="2.2"/></svg><div class="t" style="left:107.4px;top:343.9px;font-size:14.3px;color:#000;transform:scaleY(1.09);transform-origin:0 12.1px;word-spacing:0px">Nail 9</div><div style="position:absolute;left:66px;top:370px;width:22px;height:1px;background:repeating-linear-gradient(to right,#808080 0 1px,transparent 1px 2px)"></div><svg style="position:absolute;left:88px;top:364px" width="15" height="14" viewBox="0 0 15 14"><path d="M0.5 5 L5.5 1" stroke="#000" stroke-width="2.4"/><path d="M3 3 L14 13.5" stroke="#000" stroke-width="2.2"/></svg><div class="t" style="left:107.4px;top:363.9px;font-size:14.3px;color:#000;transform:scaleY(1.09);transform-origin:0 12.1px;word-spacing:0px">Nail 10</div><div style="position:absolute;left:66px;top:390px;width:22px;height:1px;background:repeating-linear-gradient(to right,#808080 0 1px,transparent 1px 2px)"></div><svg style="position:absolute;left:88px;top:384px" width="15" height="14" viewBox="0 0 15 14"><path d="M0.5 5 L5.5 1" stroke="#000" stroke-width="2.4"/><path d="M3 3 L14 13.5" stroke="#000" stroke-width="2.2"/></svg><div class="t" style="left:107.4px;top:383.9px;font-size:14.3px;color:#000;transform:scaleY(1.09);transform-origin:0 12.1px;word-spacing:0px">Nail 11</div><div style="position:absolute;left:66px;top:410px;width:22px;height:1px;background:repeating-linear-gradient(to right,#808080 0 1px,transparent 1px 2px)"></div><svg style="position:absolute;left:88px;top:404px" width="15" height="14" viewBox="0 0 15 14"><path d="M0.5 5 L5.5 1" stroke="#000" stroke-width="2.4"/><path d="M3 3 L14 13.5" stroke="#000" stroke-width="2.2"/></svg><div class="t" style="left:107.4px;top:403.9px;font-size:14.3px;color:#000;transform:scaleY(1.09);transform-origin:0 12.1px;word-spacing:0px">Nail 12</div><div style="position:absolute;left:66px;top:430px;width:22px;height:1px;background:repeating-linear-gradient(to right,#808080 0 1px,transparent 1px 2px)"></div><svg style="position:absolute;left:88px;top:424px" width="15" height="14" viewBox="0 0 15 14"><path d="M0.5 5 L5.5 1" stroke="#000" stroke-width="2.4"/><path d="M3 3 L14 13.5" stroke="#000" stroke-width="2.2"/></svg><div class="t" style="left:107.4px;top:423.9px;font-size:14.3px;color:#000;transform:scaleY(1.09);transform-origin:0 12.1px;word-spacing:0px">Nail 13</div><div style="position:absolute;left:66px;top:450px;width:22px;height:1px;background:repeating-linear-gradient(to right,#808080 0 1px,transparent 1px 2px)"></div><svg style="position:absolute;left:88px;top:444px" width="15" height="14" viewBox="0 0 15 14"><path d="M0.5 5 L5.5 1" stroke="#000" stroke-width="2.4"/><path d="M3 3 L14 13.5" stroke="#000" stroke-width="2.2"/></svg><div class="t" style="left:107.4px;top:443.9px;font-size:14.3px;color:#000;transform:scaleY(1.09);transform-origin:0 12.1px;word-spacing:0px">Nail 14</div><div style="position:absolute;left:39px;top:470px;width:23px;height:1px;background:repeating-linear-gradient(to right,#808080 0 1px,transparent 1px 2px)"></div><svg style="position:absolute;left:33px;top:465px" width="11" height="11" viewBox="0 0 11 11" shape-rendering="crispEdges"><rect x="0.5" y="0.5" width="10" height="10" fill="#fff" stroke="#909090"/><path d="M2 5.5H9" stroke="#000"/></svg><svg style="position:absolute;left:62px;top:462px" width="16" height="14" viewBox="0 0 16 14" shape-rendering="crispEdges"><path d="M1.5 4 V2.5 L2.5 1.5 H6.5 L7.5 2.5 V3.5 H13.5 V13.5 H1.5 Z" fill="#F0F0C0" stroke="#909070"/><rect x="14" y="3" width="1" height="11" fill="#000"/><rect x="2" y="13" width="13" height="1" fill="#000"/><rect x="2" y="7" width="12" height="5" fill="#101008"/><rect x="5" y="8" width="5" height="2" fill="#E8E8D0"/><rect x="11" y="9" width="2" height="1" fill="#E8E8D0"/></svg><div class="t" style="left:80.6px;top:463.9px;font-size:14.3px;color:#000;transform:scaleY(1.09);transform-origin:0 12.1px;word-spacing:0px">Components</div><div style="position:absolute;left:66px;top:490px;width:22px;height:1px;background:repeating-linear-gradient(to right,#808080 0 1px,transparent 1px 2px)"></div><svg style="position:absolute;left:88px;top:482px" width="16" height="15" viewBox="0 0 16 15" shape-rendering="crispEdges"><rect x="0" y="3" width="13" height="12" fill="#B01810"/><polygon points="0,3 3,0 16,0 13,3" fill="#D03020"/><polygon points="13,3 16,0 16,12 13,15" fill="#600000"/><path d="M3 6H5M3 9H5M8 6H10M8 9H10M3 7V8M8 7V8" stroke="#FF9080"/></svg><div class="t" style="left:107.4px;top:483.9px;font-size:14.3px;color:#000;transform:scaleY(1.09);transform-origin:0 12.1px;word-spacing:0px">Building 1</div><div style="position:absolute;left:39px;top:510px;width:23px;height:1px;background:repeating-linear-gradient(to right,#808080 0 1px,transparent 1px 2px)"></div><svg style="position:absolute;left:33px;top:505px" width="11" height="11" viewBox="0 0 11 11" shape-rendering="crispEdges"><rect x="0.5" y="0.5" width="10" height="10" fill="#fff" stroke="#909090"/><path d="M2 5.5H9" stroke="#000"/></svg><svg style="position:absolute;left:62px;top:502px" width="16" height="14" viewBox="0 0 16 14" shape-rendering="crispEdges"><path d="M1.5 4 V2.5 L2.5 1.5 H6.5 L7.5 2.5 V3.5 H13.5 V13.5 H1.5 Z" fill="#F0F0C0" stroke="#909070"/><rect x="14" y="3" width="1" height="11" fill="#000"/><rect x="2" y="13" width="13" height="1" fill="#000"/><rect x="2" y="7" width="12" height="5" fill="#101008"/><rect x="5" y="8" width="5" height="2" fill="#E8E8D0"/><rect x="11" y="9" width="2" height="1" fill="#E8E8D0"/></svg><div class="t" style="left:80.6px;top:503.9px;font-size:14.3px;color:#000;transform:scaleY(1.09);transform-origin:0 12.1px;word-spacing:0px">Loads</div><div style="position:absolute;left:66px;top:530px;width:22px;height:1px;background:repeating-linear-gradient(to right,#808080 0 1px,transparent 1px 2px)"></div><svg style="position:absolute;left:88px;top:523px" width="15" height="16" viewBox="0 0 15 16" shape-rendering="crispEdges"><rect x="3" y="0" width="9" height="4" fill="#000"/><rect x="4" y="1" width="7" height="2" fill="#A0A0A0"/><polygon points="3,4 12,4 14,6 14,14 12,16 3,16 1,14 1,6" fill="#000"/><rect x="4" y="6" width="9" height="8" fill="#fff"/><rect x="4" y="6" width="2" height="8" fill="#B0A090"/><path d="M7.5 7 V13 M7.5 7.5 H12 M7.5 10.5 H11" stroke="#D01010" stroke-width="2"/></svg><div class="t" style="left:107.4px;top:523.9px;font-size:14.3px;color:#000;transform:scaleY(1.09);transform-origin:0 12.1px;word-spacing:0px">Area load 1</div><div style="position:absolute;left:39px;top:550px;width:23px;height:1px;background:repeating-linear-gradient(to right,#808080 0 1px,transparent 1px 2px)"></div><svg style="position:absolute;left:60px;top:542px" width="18" height="16" viewBox="0 0 18 16"><path d="M3.5 2.5 L2 5.5 V10.5 L3.5 13.5 M14.5 2.5 L16 5.5 V10.5 L14.5 13.5 M6 4.5 L5 6.5 V9.5 L6 11.5 M12 4.5 L13 6.5 V9.5 L12 11.5" fill="none" stroke="#000" stroke-width="1.3" stroke-dasharray="2.2 0.8"/><rect x="8" y="7" width="2" height="2" fill="#000"/><path d="M8.5 0.5 V4 L10 3 V6 M8 10 V13 L9.5 12 V15.5" fill="none" stroke="#902030" stroke-width="1.2"/></svg><div class="t" style="left:80.6px;top:543.9px;font-size:14.3px;color:#000;transform:scaleY(1.09);transform-origin:0 12.1px;word-spacing:0px">Earthquake influence</div><div style="position:absolute;left:39px;top:570px;width:23px;height:1px;background:repeating-linear-gradient(to right,#808080 0 1px,transparent 1px 2px)"></div><svg style="position:absolute;left:60px;top:562px" width="17" height="16" viewBox="0 0 17 16" shape-rendering="crispEdges"><rect x="1" y="10" width="15" height="4" fill="#40D8E8"/><rect x="4" y="0" width="10" height="15" fill="#000"/><rect x="5" y="1" width="8" height="5" fill="#902018"/><polygon points="5,9 9,6 13,5 13,13 5,14" fill="#F0E040"/><path d="M6 10h2M10 8h2M7 12h3" stroke="#000"/></svg><div class="t" style="left:80.6px;top:563.9px;font-size:14.3px;color:#000;transform:scaleY(1.09);transform-origin:0 12.1px;word-spacing:0px">Saturation-line</div><div style="position:absolute;left:39px;top:590px;width:23px;height:1px;background:repeating-linear-gradient(to right,#808080 0 1px,transparent 1px 2px)"></div><svg style="position:absolute;left:33px;top:585px" width="11" height="11" viewBox="0 0 11 11" shape-rendering="crispEdges"><rect x="0.5" y="0.5" width="10" height="10" fill="#fff" stroke="#909090"/><path d="M2 5.5H9" stroke="#000"/></svg><svg style="position:absolute;left:62px;top:582px" width="16" height="14" viewBox="0 0 16 14" shape-rendering="crispEdges"><path d="M1.5 4 V2.5 L2.5 1.5 H6.5 L7.5 2.5 V3.5 H13.5 V13.5 H1.5 Z" fill="#F0F0C0" stroke="#909070"/><rect x="14" y="3" width="1" height="11" fill="#000"/><rect x="2" y="13" width="13" height="1" fill="#000"/><rect x="2" y="7" width="12" height="5" fill="#101008"/><rect x="5" y="8" width="5" height="2" fill="#E8E8D0"/><rect x="11" y="9" width="2" height="1" fill="#E8E8D0"/></svg><div class="t" style="left:80.6px;top:583.9px;font-size:14.3px;color:#000;transform:scaleY(1.09);transform-origin:0 12.1px;word-spacing:0px">Slip line</div><div style="position:absolute;left:66px;top:610px;width:22px;height:1px;background:repeating-linear-gradient(to right,#808080 0 1px,transparent 1px 2px)"></div><svg style="position:absolute;left:88px;top:603px" width="13" height="13" viewBox="0 0 13 13" shape-rendering="crispEdges"><rect x="0" y="0" width="13" height="13" fill="#000"/><rect x="1" y="1" width="11" height="11" fill="#fff"/><rect x="3" y="3" width="8" height="8" fill="#A0A0A0"/><rect x="3" y="3" width="8" height="1" fill="#606060"/><rect x="3" y="3" width="1" height="8" fill="#606060"/></svg><div class="t" style="left:107.4px;top:603.9px;font-size:14.3px;color:#000;transform:scaleY(1.09);transform-origin:0 12.1px;word-spacing:0px">Circular slip line</div><div style="position:absolute;left:66px;top:630px;width:22px;height:1px;background:repeating-linear-gradient(to right,#808080 0 1px,transparent 1px 2px)"></div><svg style="position:absolute;left:60px;top:625px" width="11" height="11" viewBox="0 0 11 11" shape-rendering="crispEdges"><rect x="0.5" y="0.5" width="10" height="10" fill="#fff" stroke="#909090"/><path d="M2 5.5H9" stroke="#000"/><path d="M5.5 2V9" stroke="#000"/></svg><svg style="position:absolute;left:88px;top:623px" width="13" height="13" viewBox="0 0 13 13" shape-rendering="crispEdges"><rect x="0" y="0" width="13" height="13" fill="#000"/><rect x="1" y="1" width="11" height="11" fill="#E0E0E0"/><rect x="3" y="3" width="7" height="7" fill="#000"/></svg><div class="t" style="left:107.4px;top:623.9px;font-size:14.3px;color:#000;transform:scaleY(1.09);transform-origin:0 12.1px;word-spacing:0px">Block slip plane</div><div style="position:absolute;left:39px;top:650px;width:23px;height:1px;background:repeating-linear-gradient(to right,#808080 0 1px,transparent 1px 2px)"></div><svg style="position:absolute;left:62px;top:643px" width="15" height="17" viewBox="0 0 15 17" shape-rendering="crispEdges"><path d="M0.5 0.5 H9.5 L14.5 5.5 V16.5 H0.5 Z" fill="#fff" stroke="#000"/><path d="M9.5 0.5 V5.5 H14.5" fill="none" stroke="#000"/><path d="M2 8V12M2 8H3.5Q5 8 5 10Q5 12 3.5 12H2M6.5 8V12M8 12V8L11 12V8" fill="none" stroke="#000"/></svg><div class="t" style="left:80.6px;top:643.9px;font-size:14.3px;color:#000;transform:scaleY(1.09);transform-origin:0 12.1px;word-spacing:0px">Calculation standard</div></div><div style="position:absolute;left:249px;top:134px;width:248px;height:657px;background:#D4D0C8"></div><div style="position:absolute;left:249px;top:134px;width:248px;height:1px;background:#000"></div><div style="position:absolute;left:249px;top:134px;width:1px;height:657px;background:#000"></div><div style="position:absolute;left:250px;top:135px;width:247px;height:1px;background:#F4F2EE"></div><div style="position:absolute;left:250px;top:135px;width:1px;height:656px;background:#F4F2EE"></div><div style="position:absolute;left:258px;top:150px;width:260px;height:264px;border:1px solid #808080;box-shadow:1px 1px 0 #FFFFFF, inset 1px 1px 0 #FFFFFF"></div><div style="position:absolute;left:263px;top:142px;width:32px;height:14px;background:#D4D0C8"></div><div class="t" style="left:267.5px;top:144.43px;font-size:11.3px;color:#000;transform:scaleY(1.12);transform-origin:0 9.57px;">Nails</div><div style="position:absolute;left:270px;top:162px;width:240px;height:83px;border:1px solid #808080;box-shadow:1px 1px 0 #FFFFFF, inset 1px 1px 0 #FFFFFF"></div><div style="position:absolute;left:270px;top:253px;width:240px;height:60px;border:1px solid #808080;box-shadow:1px 1px 0 #FFFFFF, inset 1px 1px 0 #FFFFFF"></div><div style="position:absolute;left:258px;top:414px;width:260px;height:216px;border:1px solid #808080;box-shadow:1px 1px 0 #FFFFFF, inset 1px 1px 0 #FFFFFF"></div><div class="t" style="right:349.5px;top:173.69px;font-size:11px;color:#000;transform:scaleY(1.13);transform-origin:0 9.31px;letter-spacing:-0.17px">Y-value of the uppermost nail row [m]:</div><div style="position:absolute;left:469px;top:168px;width:40px;height:23px;background:#fff;box-shadow:inset 1px 1px 0 #808080, inset 2px 2px 0 #404040, inset -1px -1px 0 #FFFFFF, inset -2px -2px 0 #D4D0C8"></div><div class="t" style="left:472.5px;top:173.13px;font-size:11.3px;color:#000;transform:scaleY(1.12);transform-origin:0 9.57px;">17,00</div><div class="t" style="right:349.5px;top:198.69px;font-size:11px;color:#000;transform:scaleY(1.13);transform-origin:0 9.31px;letter-spacing:-0.17px">Minimum Y- value of the nail wall [m]:</div><div style="position:absolute;left:469px;top:192px;width:40px;height:22px;background:#fff;box-shadow:inset 1px 1px 0 #808080, inset 2px 2px 0 #404040, inset -1px -1px 0 #FFFFFF, inset -2px -2px 0 #D4D0C8"></div><div class="t" style="left:472.5px;top:198.13px;font-size:11.3px;color:#000;transform:scaleY(1.12);transform-origin:0 9.57px;">3,20</div><div class="t" style="right:349.5px;top:222.69px;font-size:11px;color:#000;transform:scaleY(1.13);transform-origin:0 9.31px;letter-spacing:-0.17px">Vertical nail distance [m]:</div><div style="position:absolute;left:469px;top:216px;width:40px;height:23px;background:#fff;box-shadow:inset 1px 1px 0 #808080, inset 2px 2px 0 #404040, inset -1px -1px 0 #FFFFFF, inset -2px -2px 0 #D4D0C8"></div><div class="t" style="left:472.5px;top:222.13px;font-size:11.3px;color:#000;transform:scaleY(1.12);transform-origin:0 9.57px;">1,00</div><div class="t" style="right:349.5px;top:266.69px;font-size:11px;color:#000;transform:scaleY(1.13);transform-origin:0 9.31px;letter-spacing:-0.17px">Length of the uppermost nail row [m]:</div><div style="position:absolute;left:469px;top:260px;width:40px;height:22px;background:#fff;box-shadow:inset 1px 1px 0 #808080, inset 2px 2px 0 #404040, inset -1px -1px 0 #FFFFFF, inset -2px -2px 0 #D4D0C8"></div><div class="t" style="left:472.5px;top:266.13px;font-size:11.3px;color:#000;transform:scaleY(1.12);transform-origin:0 9.57px;">5,00</div><div class="t" style="right:349.5px;top:290.19px;font-size:11px;color:#000;transform:scaleY(1.13);transform-origin:0 9.31px;letter-spacing:-0.17px">Length of the lowest nail row [m]:</div><div style="position:absolute;left:469px;top:285px;width:40px;height:22px;background:#fff;box-shadow:inset 1px 1px 0 #808080, inset 2px 2px 0 #404040, inset -1px -1px 0 #FFFFFF, inset -2px -2px 0 #D4D0C8"></div><div class="t" style="left:472.5px;top:289.63px;font-size:11.3px;color:#000;transform:scaleY(1.12);transform-origin:0 9.57px;">12,00</div><div class="t" style="right:349.5px;top:329.69px;font-size:11px;color:#000;transform:scaleY(1.13);transform-origin:0 9.31px;letter-spacing:-0.04px">Inclination [°]:</div><div style="position:absolute;left:469px;top:324px;width:40px;height:22px;background:#fff;box-shadow:inset 1px 1px 0 #808080, inset 2px 2px 0 #404040, inset -1px -1px 0 #FFFFFF, inset -2px -2px 0 #D4D0C8"></div><div class="t" style="left:472.5px;top:329.13px;font-size:11.3px;color:#000;transform:scaleY(1.12);transform-origin:0 9.57px;">-10,00</div><div class="t" style="right:349.5px;top:357.69px;font-size:11px;color:#000;transform:scaleY(1.13);transform-origin:0 9.31px;letter-spacing:-0.04px">Middle nail shear force [kN/m]:</div><div style="position:absolute;left:469px;top:351px;width:40px;height:22px;background:#fff;box-shadow:inset 1px 1px 0 #808080, inset 2px 2px 0 #404040, inset -1px -1px 0 #FFFFFF, inset -2px -2px 0 #D4D0C8"></div><div class="t" style="left:472.5px;top:357.13px;font-size:11.3px;color:#000;transform:scaleY(1.12);transform-origin:0 9.57px;">30,00</div><div class="t" style="right:349.5px;top:383.69px;font-size:11px;color:#000;transform:scaleY(1.13);transform-origin:0 9.31px;letter-spacing:-0.17px">Horiz.nail distance [m] :</div><div style="position:absolute;left:469px;top:379px;width:40px;height:22px;background:#fff;box-shadow:inset 1px 1px 0 #808080, inset 2px 2px 0 #404040, inset -1px -1px 0 #FFFFFF, inset -2px -2px 0 #D4D0C8"></div><div class="t" style="left:472.5px;top:383.13px;font-size:11.3px;color:#000;transform:scaleY(1.12);transform-origin:0 9.57px;">1,00</div><div class="t" style="left:276.8px;top:426.43px;font-size:11.3px;color:#000;transform:scaleY(1.12);transform-origin:0 9.57px;letter-spacing:-0.1px">Nail data:</div><div class="t" style="left:276.8px;top:440.73px;font-size:11.3px;color:#000;transform:scaleY(1.05);transform-origin:0 9.57px;letter-spacing:-0.22px">To edit individual nails please open the tree element</div><div class="t" style="left:276.8px;top:452.73px;font-size:11.3px;color:#000;transform:scaleY(1.05);transform-origin:0 9.57px;letter-spacing:-0.22px">the respective nail data.</div><div style="position:absolute;left:271px;top:471px;width:240px;height:142px;background:#fff;box-shadow:inset 1px 1px 0 #808080, inset 2px 2px 0 #404040, inset -1px -1px 0 #FFFFFF, inset -2px -2px 0 #D4D0C8"></div><div style="position:absolute;left:273px;top:473px;width:69px;height:17px;background:#D4D0C8;box-shadow:inset -1px -1px 0 #404040, inset 1px 1px 0 #FFFFFF, inset -2px -2px 0 #808080"></div><div class="t" style="left:278.7px;top:477.73px;font-size:11.3px;color:#000;transform:scaleY(1.12);transform-origin:0 9.57px;letter-spacing:-0.1px">Nail</div><div style="position:absolute;left:342px;top:473px;width:50px;height:17px;background:#D4D0C8;box-shadow:inset -1px -1px 0 #404040, inset 1px 1px 0 #FFFFFF, inset -2px -2px 0 #808080"></div><div class="t" style="left:347.7px;top:477.73px;font-size:11.3px;color:#000;transform:scaleY(1.12);transform-origin:0 9.57px;letter-spacing:-0.1px">X [m]</div><div style="position:absolute;left:392px;top:473px;width:50px;height:17px;background:#D4D0C8;box-shadow:inset -1px -1px 0 #404040, inset 1px 1px 0 #FFFFFF, inset -2px -2px 0 #808080"></div><div class="t" style="left:397.7px;top:477.73px;font-size:11.3px;color:#000;transform:scaleY(1.12);transform-origin:0 9.57px;letter-spacing:-0.1px">Y [m]</div><div style="position:absolute;left:442px;top:473px;width:62px;height:17px;background:#D4D0C8;box-shadow:inset -1px -1px 0 #404040, inset 1px 1px 0 #FFFFFF, inset -2px -2px 0 #808080"></div><div class="t" style="left:447.7px;top:477.73px;font-size:11.3px;color:#000;transform:scaleY(1.12);transform-origin:0 9.57px;letter-spacing:-0.1px">Length [...</div><svg style="position:absolute;left:275px;top:491px" width="15" height="14" viewBox="0 0 15 14"><path d="M0.5 5 L5.5 1" stroke="#000" stroke-width="2.4"/><path d="M3 3 L14 13.5" stroke="#000" stroke-width="2.2"/></svg><div class="t" style="left:292.5px;top:494.43px;font-size:11.3px;color:#000;transform:scaleY(1.12);transform-origin:0 9.57px;">Nail 1</div><div class="t" style="left:351.9px;top:494.43px;font-size:11.3px;color:#000;transform:scaleY(1.12);transform-origin:0 9.57px;">12,31</div><div class="t" style="left:402.8px;top:494.43px;font-size:11.3px;color:#000;transform:scaleY(1.12);transform-origin:0 9.57px;">17,02</div><div class="t" style="left:455.2px;top:494.43px;font-size:11.3px;color:#000;transform:scaleY(1.12);transform-origin:0 9.57px;">5,00</div><svg style="position:absolute;left:275px;top:508px" width="15" height="14" viewBox="0 0 15 14"><path d="M0.5 5 L5.5 1" stroke="#000" stroke-width="2.4"/><path d="M3 3 L14 13.5" stroke="#000" stroke-width="2.2"/></svg><div class="t" style="left:292.5px;top:511.43px;font-size:11.3px;color:#000;transform:scaleY(1.12);transform-origin:0 9.57px;">Nail 2</div><div class="t" style="left:351.9px;top:511.43px;font-size:11.3px;color:#000;transform:scaleY(1.12);transform-origin:0 9.57px;">12,14</div><div class="t" style="left:402.8px;top:511.43px;font-size:11.3px;color:#000;transform:scaleY(1.12);transform-origin:0 9.57px;">16,03</div><div class="t" style="left:455.2px;top:511.43px;font-size:11.3px;color:#000;transform:scaleY(1.12);transform-origin:0 9.57px;">5,50</div><svg style="position:absolute;left:275px;top:525px" width="15" height="14" viewBox="0 0 15 14"><path d="M0.5 5 L5.5 1" stroke="#000" stroke-width="2.4"/><path d="M3 3 L14 13.5" stroke="#000" stroke-width="2.2"/></svg><div class="t" style="left:292.5px;top:528.43px;font-size:11.3px;color:#000;transform:scaleY(1.12);transform-origin:0 9.57px;">Nail 3</div><div class="t" style="left:351.9px;top:528.43px;font-size:11.3px;color:#000;transform:scaleY(1.12);transform-origin:0 9.57px;">11,98</div><div class="t" style="left:402.8px;top:528.43px;font-size:11.3px;color:#000;transform:scaleY(1.12);transform-origin:0 9.57px;">15,04</div><div class="t" style="left:455.2px;top:528.43px;font-size:11.3px;color:#000;transform:scaleY(1.12);transform-origin:0 9.57px;">6,00</div><svg style="position:absolute;left:275px;top:542px" width="15" height="14" viewBox="0 0 15 14"><path d="M0.5 5 L5.5 1" stroke="#000" stroke-width="2.4"/><path d="M3 3 L14 13.5" stroke="#000" stroke-width="2.2"/></svg><div class="t" style="left:292.5px;top:545.43px;font-size:11.3px;color:#000;transform:scaleY(1.12);transform-origin:0 9.57px;">Nail 4</div><div class="t" style="left:351.9px;top:545.43px;font-size:11.3px;color:#000;transform:scaleY(1.12);transform-origin:0 9.57px;">11,82</div><div class="t" style="left:402.8px;top:545.43px;font-size:11.3px;color:#000;transform:scaleY(1.12);transform-origin:0 9.57px;">14,06</div><div class="t" style="left:455.2px;top:545.43px;font-size:11.3px;color:#000;transform:scaleY(1.12);transform-origin:0 9.57px;">6,50</div><svg style="position:absolute;left:275px;top:559px" width="15" height="14" viewBox="0 0 15 14"><path d="M0.5 5 L5.5 1" stroke="#000" stroke-width="2.4"/><path d="M3 3 L14 13.5" stroke="#000" stroke-width="2.2"/></svg><div class="t" style="left:292.5px;top:562.43px;font-size:11.3px;color:#000;transform:scaleY(1.12);transform-origin:0 9.57px;">Nail 5</div><div class="t" style="left:351.9px;top:562.43px;font-size:11.3px;color:#000;transform:scaleY(1.12);transform-origin:0 9.57px;">11,66</div><div class="t" style="left:402.8px;top:562.43px;font-size:11.3px;color:#000;transform:scaleY(1.12);transform-origin:0 9.57px;">13,07</div><div class="t" style="left:455.2px;top:562.43px;font-size:11.3px;color:#000;transform:scaleY(1.12);transform-origin:0 9.57px;">7,00</div><svg style="position:absolute;left:275px;top:576px" width="15" height="14" viewBox="0 0 15 14"><path d="M0.5 5 L5.5 1" stroke="#000" stroke-width="2.4"/><path d="M3 3 L14 13.5" stroke="#000" stroke-width="2.2"/></svg><div class="t" style="left:292.5px;top:579.43px;font-size:11.3px;color:#000;transform:scaleY(1.12);transform-origin:0 9.57px;">Nail 6</div><div class="t" style="left:351.9px;top:579.43px;font-size:11.3px;color:#000;transform:scaleY(1.12);transform-origin:0 9.57px;">11,49</div><div class="t" style="left:402.8px;top:579.43px;font-size:11.3px;color:#000;transform:scaleY(1.12);transform-origin:0 9.57px;">12,08</div><div class="t" style="left:455.2px;top:579.43px;font-size:11.3px;color:#000;transform:scaleY(1.12);transform-origin:0 9.57px;">7,50</div><svg style="position:absolute;left:275px;top:590px" width="6" height="6" viewBox="0 0 6 6"><path d="M0.5 5 L5 1.5" stroke="#000" stroke-width="2"/></svg><div style="position:absolute;left:273px;top:596px;width:236px;height:15px;background:repeating-conic-gradient(#fff 0 25%,#D4D0C8 0 50%) 0 0/2px 2px"></div><div style="position:absolute;left:273px;top:596px;width:16px;height:15px;background:#D4D0C8;box-shadow:inset -1px -1px 0 #404040, inset 1px 1px 0 #FFFFFF, inset -2px -2px 0 #808080"></div><svg style="position:absolute;left:277px;top:599px" width="6" height="9" viewBox="0 0 6 9"><polygon points="5,0 1,4.5 5,9" fill="#000"/></svg><div style="position:absolute;left:289px;top:596px;width:220px;height:15px;background:#D4D0C8;box-shadow:inset 1px 1px 0 #FFFFFF, inset 0 -1px 0 #404040, inset 2px 2px 0 #D4D0C8"></div><div style="position:absolute;left:497px;top:78px;width:308px;height:713px;background:#D4D0C8"></div><div style="position:absolute;left:497px;top:78px;width:1px;height:713px;background:#D4D0C8"></div><div style="position:absolute;left:498px;top:79px;width:1px;height:712px;background:#FFFFFF"></div><div style="position:absolute;left:497px;top:78px;width:308px;height:1px;background:#D4D0C8"></div><div style="position:absolute;left:498px;top:79px;width:307px;height:1px;background:#FFFFFF"></div><div style="position:absolute;left:501px;top:82px;width:303px;height:20px;background:linear-gradient(to right,#0A246A,#A6CAF0 390px)"></div><svg style="position:absolute;left:502px;top:83px" width="18" height="18" viewBox="0 0 18 18" shape-rendering="crispEdges"><rect x="0" y="0" width="18" height="18" fill="#0A1A6A"/><rect x="1" y="1" width="16" height="16" fill="#EEF0F8"/><rect x="1" y="1" width="9" height="8" fill="#40E0F0"/><rect x="10" y="1" width="7" height="6" fill="#A8C8F0"/><rect x="1" y="9" width="5" height="3" fill="#1A2A8A"/><polygon points="3,15 7,10 12,7 17,9 16,14 10,16" fill="#E8B860"/><polygon points="6,10 14,15 13,17 5,12" fill="#503010"/><rect x="12" y="4" width="5" height="4" fill="#8A4020"/><polygon points="9,9 13,7 12,11" fill="#F0E050"/></svg><div class="t" style="left:521.5px;top:84.54px;font-size:15.9px;color:#fff;letter-spacing:0.15px">NAGDEMO3_E.BSH / Project name</div><div style="position:absolute;left:501px;top:102px;width:304px;height:1px;background:#808080"></div><div style="position:absolute;left:501px;top:103px;width:304px;height:1px;background:#FFFFFF"></div><div style="position:absolute;left:506px;top:108px;width:22px;height:21px;background:repeating-conic-gradient(#fff 0 25%,#D4D0C8 0 50%) 0 0/2px 2px;box-shadow:inset 1px 1px 0 #808080, inset -1px -1px 0 #FFFFFF"></div><svg style="position:absolute;left:511px;top:112px" width="16" height="15" viewBox="0 0 16 15"><circle cx="6" cy="6" r="4.8" fill="#C8F0F0" stroke="#000" stroke-width="1.7"/><path d="M9.5 9.5 L15 14.5" stroke="#000" stroke-width="2.4"/></svg><svg style="position:absolute;left:532px;top:112px" width="17" height="15" viewBox="0 0 17 15"><path d="M4.5 7.5 A5 4.2 0 1 1 11 10.5 H3" fill="none" stroke="#000" stroke-width="1.6"/><path d="M1 4.5 L1 9.5 L6 9.5" fill="none" stroke="#000" stroke-width="1.6"/><path d="M1 13.5H16" stroke="#000" stroke-width="1.6" stroke-dasharray="3 1"/></svg><svg style="position:absolute;left:555px;top:111px" width="16" height="16" viewBox="0 0 16 16" shape-rendering="crispEdges"><rect x="0" y="0" width="16" height="16" fill="#000"/><rect x="1" y="1" width="14" height="2" fill="#2040A0"/><rect x="2" y="4" width="12" height="10" fill="#D8E060"/><path d="M2 11 L6 8 L9 10 L14 6" stroke="#30A030" fill="none"/></svg><svg style="position:absolute;left:578px;top:111px" width="16" height="16" viewBox="0 0 16 16" shape-rendering="crispEdges"><rect x="0.5" y="0.5" width="15" height="15" fill="#E0E0E8" stroke="#000"/><rect x="1" y="1" width="14" height="2" fill="#2040A0"/><rect x="3.5" y="5.5" width="9" height="8" fill="none" stroke="#000"/><path d="M3 9H13" stroke="#000"/></svg><svg style="position:absolute;left:601px;top:111px" width="16" height="16" viewBox="0 0 16 16" shape-rendering="crispEdges"><rect x="0.5" y="0.5" width="15" height="15" fill="#E8E8F0" stroke="#000"/><rect x="1" y="1" width="14" height="2" fill="#2040A0"/><path d="M2 6H14M2 9H14M2 12H14" stroke="#505050"/><path d="M2 4H14" stroke="#A0A0D0"/></svg><svg style="position:absolute;left:624px;top:111px" width="17" height="16" viewBox="0 0 17 16"><path d="M2 4 Q4 0 8 3 L14 9 Q16 14 12 15.5 Q8 16 5.5 12 L2 7 Z" fill="#F4F4F4" stroke="#000" stroke-width="1.4"/><path d="M3.5 7 L8.5 3.5" stroke="#000" stroke-width="1.2"/></svg><div style="position:absolute;left:644px;top:108px;width:23px;height:21px;background:repeating-conic-gradient(#fff 0 25%,#D4D0C8 0 50%) 0 0/2px 2px;box-shadow:inset 1px 1px 0 #808080, inset -1px -1px 0 #FFFFFF"></div><svg style="position:absolute;left:647px;top:111px" width="18" height="15" viewBox="0 0 18 15"><path d="M3 13.5 Q1 9 5 7.5 L13 3.5" fill="none" stroke="#404040" stroke-width="3"/><rect x="10" y="1" width="7" height="3" fill="#505050"/><path d="M1.5 14.5 L5 11" stroke="#000" stroke-width="1.6"/><path d="M5 9 L12 5" stroke="#909090" stroke-width="1"/></svg><div style="position:absolute;left:671px;top:108px;width:1px;height:22px;background:#808080"></div><div style="position:absolute;left:672px;top:108px;width:1px;height:22px;background:#FFFFFF"></div><svg style="position:absolute;left:680px;top:111px" width="15" height="15" viewBox="0 0 15 15" shape-rendering="crispEdges"><rect x="0.5" y="0.5" width="14" height="14" fill="none" stroke="#A0A0A0" stroke-dasharray="2 1"/><rect x="3" y="2" width="9" height="5" fill="#A8A8A8"/><rect x="6" y="7" width="3" height="7" fill="#A8A8A8"/><path d="M4 3H11" stroke="#fff"/></svg><svg style="position:absolute;left:703px;top:111px" width="15" height="15" viewBox="0 0 15 15" shape-rendering="crispEdges"><rect x="0.5" y="0.5" width="14" height="14" fill="#F0F020" stroke="#000" stroke-dasharray="2 1"/><polygon points="1,14 1,9 7,5 7,14" fill="#40B030"/><rect x="7" y="2" width="7" height="12" fill="#F0F020"/><rect x="7" y="2" width="1" height="12" fill="#208020"/></svg><div style="position:absolute;left:725px;top:108px;width:1px;height:22px;background:#808080"></div><div style="position:absolute;left:726px;top:108px;width:1px;height:22px;background:#FFFFFF"></div><svg style="position:absolute;left:733px;top:113px" width="14" height="12" viewBox="0 0 14 12" shape-rendering="crispEdges"><path d="M10 0.5H13M8 2.5H13M6 4.5H13M4 6.5H13M2 8.5H13" stroke="#707070"/><rect x="0" y="10" width="14" height="2" fill="#000"/></svg><svg style="position:absolute;left:757px;top:112px" width="13" height="12" viewBox="0 0 13 12" shape-rendering="crispEdges"><rect x="0" y="0" width="13" height="12" fill="#000"/><rect x="2" y="2" width="3" height="8" fill="#C0C0C0"/><rect x="6" y="2" width="5" height="8" fill="#60B060"/><polygon points="6,10 6,7 11,4 11,10" fill="#E0E020"/></svg><div style="position:absolute;left:778px;top:108px;width:1px;height:22px;background:#808080"></div><div style="position:absolute;left:779px;top:108px;width:1px;height:22px;background:#FFFFFF"></div><svg style="position:absolute;left:787px;top:111px" width="16" height="14" viewBox="0 0 16 14" shape-rendering="crispEdges"><rect x="0" y="0" width="16" height="14" fill="#000"/><rect x="1" y="1" width="14" height="12" fill="#707048"/><rect x="3" y="2" width="10" height="2" fill="#E0E0C0"/><path d="M3 6.5H4M6 6.5H7M9 6.5H10M12 6.5H13M3 8.5H4M6 8.5H7M9 8.5H10M12 8.5H13M3 10.5H4M6 10.5H7M9 10.5H10M12 10.5H13" stroke="#E0E0C0"/></svg><div style="position:absolute;left:500px;top:134px;width:305px;height:657px;background:#fff"></div><div style="position:absolute;left:500px;top:134px;width:1px;height:657px;background:#808080"></div><div style="position:absolute;left:501px;top:134px;width:1px;height:657px;background:#404040"></div><div style="position:absolute;left:500px;top:134px;width:305px;height:1px;background:#808080"></div><div style="position:absolute;left:501px;top:135px;width:304px;height:1px;background:#404040"></div><div style="position:absolute;left:805px;top:77px;width:1px;height:714px;background:#FFFFFF"></div><svg style="position:absolute;left:502px;top:136px" width="303" height="655" viewBox="502 136 303 655"><polygon points="502.00,504.00 538.06,504.00 543.47,469.81 805.00,421.80 805.00,544.50 502.00,544.50" fill="#FFFF00"/><polygon points="549.97,469.81 557.52,421.98 805.00,368.10 805.00,421.80" fill="#CC9900"/><polygon points="557.52,421.98 573.72,319.50 805.00,319.50 805.00,368.10" fill="#FF6699"/><polygon points="573.72,319.50 581.30,271.50 718.00,271.50 718.00,319.50" fill="#666600"/><path d="M573.72 319.5 H718" stroke="#301800" stroke-width="1"/><path d="M557.52 421.98 L805 368.1" stroke="#703010" stroke-width="1"/><path d="M549.97 469.81 L805 421.8" stroke="#704010" stroke-width="1"/><path d="M718 318.8 H805" stroke="#22CC22" stroke-width="2"/><path d="M719 300.5 H805" stroke="#005500" stroke-width="1"/><path d="M720.5 300 V318" stroke="#005500" stroke-width="1"/><path d="M724.5 300 V318" stroke="#005500" stroke-width="1"/><path d="M727.5 300 V318" stroke="#005500" stroke-width="1"/><path d="M734.5 300 V318" stroke="#005500" stroke-width="1"/><path d="M741.5 300 V318" stroke="#005500" stroke-width="1"/><path d="M744.5 300 V318" stroke="#005500" stroke-width="1"/><path d="M746.5 300 V318" stroke="#005500" stroke-width="1"/><path d="M754.5 300 V318" stroke="#005500" stroke-width="1"/><path d="M761.5 300 V318" stroke="#005500" stroke-width="1"/><path d="M768.5 300 V318" stroke="#005500" stroke-width="1"/><path d="M776.5 300 V318" stroke="#005500" stroke-width="1"/><path d="M778.5 300 V318" stroke="#005500" stroke-width="1"/><path d="M786.5 300 V318" stroke="#005500" stroke-width="1"/><path d="M793.5 300 V318" stroke="#005500" stroke-width="1"/><path d="M796.5 300 V318" stroke="#005500" stroke-width="1"/><path d="M798.5 300 V318" stroke="#005500" stroke-width="1"/><path d="M801.5 300 V318" stroke="#005500" stroke-width="1"/><text x="780" y="298.5" font-family="Liberation Mono" font-size="6.5" font-weight="bold" fill="#003300">20,0 k</text><path d="M581.30 272.2 H718 V319.5" fill="none" stroke="#33DD33" stroke-width="2"/><polygon points="574.80,271.50 581.30,271.50 544.56,504.00 538.06,504.00" fill="#808080"/><path d="M581.80 271.5 L545.06 504" stroke="#50B050" stroke-width="1.2"/><path d="M502 504 H538.06" stroke="#33DD33" stroke-width="2"/><path d="M574.74 313.00 L643.00 324.60" stroke="#000" stroke-width="1"/><path d="M572.60 326.55 L647.40 339.27" stroke="#000" stroke-width="1"/><path d="M570.46 340.10 L651.80 353.93" stroke="#000" stroke-width="1"/><path d="M568.32 353.65 L656.20 368.59" stroke="#000" stroke-width="1"/><path d="M566.18 367.20 L660.60 383.25" stroke="#000" stroke-width="1"/><path d="M564.04 380.75 L665.00 397.91" stroke="#000" stroke-width="1"/><path d="M561.90 394.30 L669.40 412.58" stroke="#000" stroke-width="1"/><path d="M559.76 407.85 L673.80 427.24" stroke="#000" stroke-width="1"/><path d="M557.62 421.40 L678.20 441.90" stroke="#000" stroke-width="1"/><path d="M555.47 434.95 L682.60 456.56" stroke="#000" stroke-width="1"/><path d="M553.33 448.50 L687.00 471.22" stroke="#000" stroke-width="1"/><path d="M551.19 462.05 L691.40 485.89" stroke="#000" stroke-width="1"/><path d="M549.05 475.60 L695.80 500.55" stroke="#000" stroke-width="1"/><path d="M546.91 489.15 L700.20 515.21" stroke="#000" stroke-width="1"/><rect x="608.70" y="306.00" width="5" height="13.6" fill="#F8F0C0"/><text x="0" y="0" transform="translate(609.00,312.50) rotate(90)" font-family="Liberation Sans" font-size="6.5" text-anchor="middle" fill="#000">1</text><rect x="609.78" y="319.55" width="5" height="13.6" fill="#fff"/><text x="0" y="0" transform="translate(610.08,326.05) rotate(90)" font-family="Liberation Sans" font-size="6.5" text-anchor="middle" fill="#000">2</text><rect x="610.87" y="333.10" width="5" height="13.6" fill="#fff"/><text x="0" y="0" transform="translate(611.17,339.60) rotate(90)" font-family="Liberation Sans" font-size="6.5" text-anchor="middle" fill="#000">3</text><rect x="611.95" y="346.65" width="5" height="13.6" fill="#fff"/><text x="0" y="0" transform="translate(612.25,353.15) rotate(90)" font-family="Liberation Sans" font-size="6.5" text-anchor="middle" fill="#000">4</text><rect x="613.04" y="360.20" width="5" height="13.6" fill="#fff"/><text x="0" y="0" transform="translate(613.34,366.70) rotate(90)" font-family="Liberation Sans" font-size="6.5" text-anchor="middle" fill="#000">5</text><rect x="614.12" y="373.75" width="5" height="13.6" fill="#fff"/><text x="0" y="0" transform="translate(614.42,380.25) rotate(90)" font-family="Liberation Sans" font-size="6.5" text-anchor="middle" fill="#000">6</text><rect x="615.20" y="387.30" width="5" height="13.6" fill="#fff"/><text x="0" y="0" transform="translate(615.50,393.80) rotate(90)" font-family="Liberation Sans" font-size="6.5" text-anchor="middle" fill="#000">7</text><rect x="616.29" y="400.85" width="5" height="13.6" fill="#fff"/><text x="0" y="0" transform="translate(616.59,407.35) rotate(90)" font-family="Liberation Sans" font-size="6.5" text-anchor="middle" fill="#000">8</text><rect x="617.37" y="414.40" width="5" height="13.6" fill="#fff"/><text x="0" y="0" transform="translate(617.67,420.90) rotate(90)" font-family="Liberation Sans" font-size="6.5" text-anchor="middle" fill="#000">9</text><rect x="618.46" y="427.95" width="5" height="13.6" fill="#fff"/><text x="0" y="0" transform="translate(618.76,434.45) rotate(90)" font-family="Liberation Sans" font-size="6.5" text-anchor="middle" fill="#000">10</text><rect x="619.54" y="441.50" width="5" height="13.6" fill="#fff"/><text x="0" y="0" transform="translate(619.84,448.00) rotate(90)" font-family="Liberation Sans" font-size="6.5" text-anchor="middle" fill="#000">11</text><rect x="620.62" y="455.05" width="5" height="13.6" fill="#fff"/><text x="0" y="0" transform="translate(620.92,461.55) rotate(90)" font-family="Liberation Sans" font-size="6.5" text-anchor="middle" fill="#000">12</text><rect x="621.71" y="468.60" width="5" height="13.6" fill="#fff"/><text x="0" y="0" transform="translate(622.01,475.10) rotate(90)" font-family="Liberation Sans" font-size="6.5" text-anchor="middle" fill="#000">13</text><rect x="622.79" y="482.15" width="5" height="13.6" fill="#fff"/><text x="0" y="0" transform="translate(623.09,488.65) rotate(90)" font-family="Liberation Sans" font-size="6.5" text-anchor="middle" fill="#000">14</text><path d="M627.4 271.5 L665.4 397.1 L723 319.7 M665.4 397.1 L545 504" fill="none" stroke="#DD1100" stroke-width="2"/><text x="0" y="0" transform="translate(540.5,378) rotate(90)" font-family="Liberation Sans" font-size="8.5" font-weight="bold" fill="#000">TT4</text><rect x="502" y="544.5" width="303" height="1" fill="#000"/><rect x="502" y="545" width="7" height="5" fill="#000"/><rect x="509" y="546" width="136" height="3" fill="#fff"/><rect x="645" y="545" width="140" height="5" fill="#000"/><rect x="785" y="546" width="20" height="3" fill="#fff"/><path d="M502 549.5 H805" stroke="#000" stroke-width="1"/><text x="509" y="559.5" font-family="Liberation Mono" font-size="6.5" font-weight="bold" fill="#000">1,40</text><text x="645" y="559.5" font-family="Liberation Mono" font-size="6.5" font-weight="bold" fill="#000">11,40</text><text x="785" y="559.5" font-family="Liberation Mono" font-size="6.5" font-weight="bold" fill="#000">21,40</text><path d="M502 580.5 H805 M502 654.5 H805 M607.5 580 V655" stroke="#000" stroke-width="1"/><rect x="502" y="678" width="303" height="1" fill="#000"/><rect x="502" y="679" width="303" height="6" fill="#808080"/></svg><div class="t" style="left:609.5px;top:588.07px;font-size:9.6px;color:#000;transform:scaleY(1.05);transform-origin:0 8.13px;letter-spacing:-0.1px">Construction proj.:</div><div class="t" style="left:698.5px;top:588.07px;font-size:9.6px;color:#000;transform:scaleY(1.05);transform-origin:0 8.13px;letter-spacing:-0.1px">Demo-example (3)</div><div class="t" style="left:698.5px;top:601.37px;font-size:9.6px;color:#000;transform:scaleY(1.05);transform-origin:0 8.13px;letter-spacing:-0.1px">nailed slope</div><div class="t" style="left:609.5px;top:627.87px;font-size:9.6px;color:#000;transform:scaleY(1.05);transform-origin:0 8.13px;letter-spacing:-0.1px">Project-no.:</div><div class="t" style="left:609.5px;top:640.37px;font-size:9.6px;color:#000;transform:scaleY(1.05);transform-origin:0 8.13px;letter-spacing:-0.1px">Date:</div><div class="t" style="left:698.5px;top:640.37px;font-size:9.6px;color:#000;transform:scaleY(1.05);transform-origin:0 8.13px;letter-spacing:-0.1px">28.10.2003</div>
</body></html>
